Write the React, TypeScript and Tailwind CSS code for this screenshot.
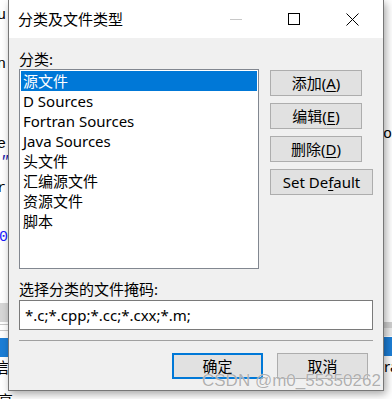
import React from 'react';

const categories = ['源文件', 'D Sources', 'Fortran Sources', 'Java Sources', '头文件', '汇编源文件', '资源文件', '脚本'];

const font = { fontFamily: '"Segoe UI", "Noto Sans", "Noto Sans CJK SC", sans-serif' };

function SideButton({ label, mnemonic, after, wide }: { label: string; mnemonic: string; after: string; wide?: boolean }) {
  return (
    <button
      className={`h-[26px] ${wide ? 'w-[103px]' : 'w-[92px]'} bg-[#e1e1e1] border border-[#adadad] text-[15px] leading-none text-black flex items-center justify-center`}
    >
      {label}
      <span className="underline underline-offset-2">{mnemonic}</span>
      {after}
    </button>
  );
}

export default function App() {
  return (
    <div className="relative w-[392px] h-[399px] bg-white overflow-hidden text-black" style={font}>
      {/* editor behind the dialog */}
      <div className="absolute left-0 top-0 w-[10px] h-full text-[15px] font-['Liberation_Mono',monospace]">
        <span className="absolute left-[-3px] top-[5px]">u</span>
        <span className="absolute left-[-3px] top-[54px]">n</span>
        <span className="absolute left-[-3px] top-[134px]">e</span>
        <span className="absolute left-[0px] top-[152px] text-[#1a1aa6] italic">"</span>
        <span className="absolute left-[-3px] top-[178px]">r</span>
        <span className="absolute left-[-1px] top-[227px] text-[#1a1aff]">0</span>
        <div className="absolute left-0 top-[303px] w-full h-[19px] bg-[#d6d6d6]" />
        <div className="absolute left-0 top-[324px] w-full h-[1px] bg-[#c8c8c8]" />
        <div className="absolute left-0 top-[330px] w-full h-[1px] bg-[#c8c8c8]" />
        <div className="absolute left-0 top-[338px] w-full h-[19px] bg-[#1c7ed6]" />
        <span className="absolute left-[-6px] top-[356px] text-[15px] font-['Noto_Sans_CJK_SC']">信</span>
        <span className="absolute left-[-2px] top-[389px] text-[15px] font-['Noto_Sans_CJK_SC']">享</span>
      </div>
      <div className="absolute right-0 top-0 w-[9px] h-full bg-white text-[15px]">
        <span className="absolute left-[0px] top-[124px] font-['Liberation_Mono',monospace]">oo</span>
        <div className="absolute left-0 top-[322px] w-full h-[6px] bg-[#d0d0d0]" />
        <div className="absolute left-0 top-[328px] w-full h-[8px] bg-[#ececec]" />
        <div className="absolute left-0 top-[337px] w-full h-[19px] bg-[#1c7ed6]" />
        <span className="absolute left-[1px] top-[355px]">ra</span>
      </div>

      {/* dialog */}
      <div className="absolute left-[8px] top-0 w-[376px] h-[391px] bg-[#f0f0f0] border border-t-0 border-[#777777] shadow-[2px_3px_8px_rgba(0,0,0,0.35)] flex flex-col">
        {/* title bar */}
        <div className="h-[38px] bg-white flex items-center shrink-0">
          <span className="ml-[9px] text-[15px]">分类及文件类型</span>
          <div className="ml-auto mr-[2px] flex items-center h-full">
            <div className="w-[58px] h-full flex items-center justify-center">
              <div className="w-[12px] h-px bg-[#c8c8c8]" />
            </div>
            <div className="w-[58px] h-full flex items-center justify-center">
              <div className="w-[12px] h-[12px] border border-black" />
            </div>
            <div className="w-[58px] h-full flex items-center justify-center">
              <svg width="13" height="13" viewBox="0 0 13 13">
                <path d="M0.5 0.5 L12.5 12.5 M12.5 0.5 L0.5 12.5" stroke="#000" strokeWidth="1" />
              </svg>
            </div>
          </div>
        </div>

        {/* body */}
        <div className="flex flex-col pl-[10px] pr-[10px] pt-[11px]">
          <div className="h-[20px] text-[15px] leading-[20px]">分类:</div>
          <div className="flex items-start">
            <div className="w-[240px] h-[200px] bg-white border border-[#828790] p-[1px]">
              {categories.map((c, i) => (
                <div
                  key={c}
                  className={`h-[20px] leading-[20px] text-[15px] pl-[2px] ${i === 0 ? 'bg-[#0078d7] text-white' : ''}`}
                >
                  {c}
                </div>
              ))}
            </div>
            <div className="ml-[11px] pt-[1px] flex flex-col gap-[7px]">
              <SideButton label="添加(" mnemonic="A" after=")" />
              <SideButton label="编辑(" mnemonic="E" after=")" />
              <SideButton label="删除(" mnemonic="D" after=")" />
              <SideButton label="Set De" mnemonic="f" after="ault" wide />
            </div>
          </div>
          <div className="mt-[10px] h-[21px] text-[15px] leading-[20px]">选择分类的文件掩码:</div>
          <div className="w-[354px] h-[30px] bg-white border border-[#7a7a7a] text-[15px] leading-[28px] pl-[5px]">
            *.c;*.cpp;*.cc;*.cxx;*.m;
          </div>
          <div className="mt-[10px] w-[354px] h-px bg-[#a0a0a0]" />
          <div className="mt-[12px] flex justify-end pr-[5px] gap-[14px]">
            <button className="w-[91px] h-[26px] bg-[#e1e1e1] border-2 border-[#0078d7] text-[15px] leading-none">确定</button>
            <button className="w-[91px] h-[26px] bg-[#e1e1e1] border border-[#adadad] text-[15px] leading-none">取消</button>
          </div>
        </div>
      </div>

      {/* watermark */}
      <div
        className="absolute left-[202px] top-[372px] text-[17px] leading-none text-[rgba(150,150,150,0.75)] font-['Liberation_Sans',sans-serif] whitespace-nowrap"
        style={{ textShadow: '0 0 1px #fff' }}
      >
        CSDN @m0_55350262
      </div>
    </div>
  );
}
